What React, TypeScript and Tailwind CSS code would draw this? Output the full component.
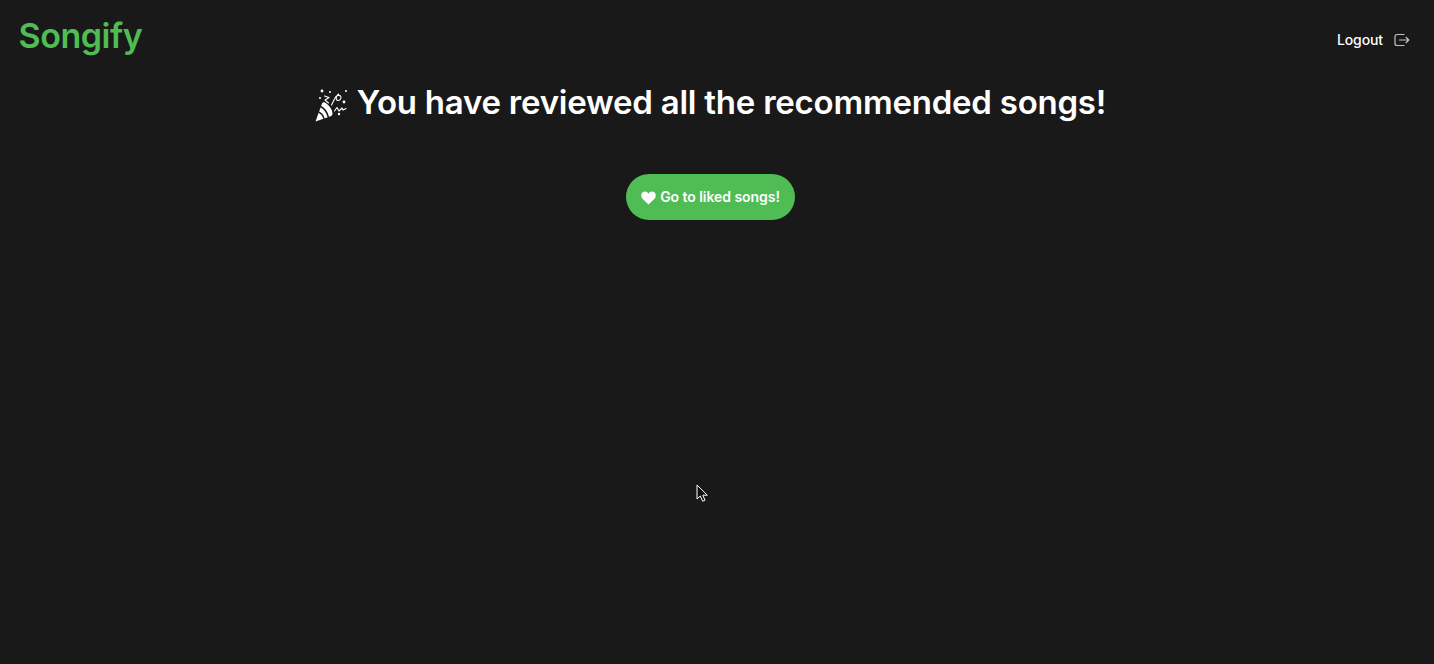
import React from "react";

const PartyIcon = () => (
  <svg width="34" height="38" viewBox="0 0 34 38" fill="none" className="shrink-0">
    {/* cone */}
    <path d="M0.5 37.5L7 19.5C8 17.5 10 18 12 20C15 22.5 17.5 26 17.5 29.5C17.5 31.5 16.5 32 15 32.5Z" fill="#fff" />
    <path d="M5.6 22.5C8.5 24 12 27.5 13.4 33.2M3.6 28C6 29 8 31.2 9 34.8" stroke="#191919" strokeWidth="1.5" />
    {/* streamers */}
    <path d="M9.5 12L14 13.5L10 16L13.5 19" stroke="#fff" strokeWidth="1.1" strokeLinecap="round" strokeLinejoin="round" />
    <path d="M16.5 21L20 14C21 11.5 24.5 10.5 25.8 12.5C27 14.8 24 17.5 21.8 16C20.5 15 21.5 11.5 23.5 10" stroke="#fff" strokeWidth="1.1" strokeLinecap="round" />
    <path d="M19.5 27L22 23.5L24 27L27 24L28 26L31 24.5" stroke="#fff" strokeWidth="1.1" strokeLinecap="round" strokeLinejoin="round" />
    {/* confetti dots */}
    <circle cx="7" cy="7" r="1.4" fill="#fff" />
    <circle cx="15" cy="8" r="1" fill="#fff" />
    <circle cx="31" cy="7" r="1" fill="#fff" />
    <circle cx="5" cy="14" r="1" fill="#fff" />
    <circle cx="29" cy="18" r="1.4" fill="#fff" />
    <circle cx="24" cy="30" r="1.2" fill="#fff" />
  </svg>
);

const LogoutIcon = () => (
  <svg width="16" height="14" viewBox="0 0 16 14" fill="none" stroke="#c4c4c4" strokeWidth="1.2" strokeLinecap="round" strokeLinejoin="round">
    <path d="M10 1.5H3A2 2 0 0 0 1 3.5V10.5A2 2 0 0 0 3 12.5H10" />
    <path d="M5.5 7H14.8M12 4.3L14.8 7L12 9.7" />
  </svg>
);

const HeartIcon = () => (
  <svg width="15" height="15" viewBox="0 0 14 14" fill="#fff">
    <path d="M7 13.6L1.4 8.1C-0.3 6.3 0 3.4 1.6 2.2C3.4 0.9 5.8 1.5 7 3.5C8.2 1.5 10.6 0.9 12.4 2.2C14 3.4 14.3 6.3 12.6 8.1Z" />
  </svg>
);

const Cursor = () => (
  <svg width="13" height="19" viewBox="0 0 13 19" className="absolute left-[696px] top-[484px]">
    <path d="M1 1V15L4.3 12L6.6 17.2L9 16.2L6.8 11.2H11.3Z" fill="#111" stroke="#fff" strokeWidth="1" strokeLinejoin="round" />
  </svg>
);

export default function App() {
  return (
    <div className="relative h-[664px] overflow-hidden bg-[#191919] text-white font-['Inter',sans-serif]">
      <header className="flex h-[75px] items-start justify-between pl-[18.5px] pr-[24px]">
        <h1 className="mt-[14px] text-[34px] leading-[44px] font-[560] tracking-[-0.45px] text-[#4fbd54]">Songify</h1>
        <button className="mt-[30px] flex items-center gap-[11px] text-sm leading-5 font-medium">
          <span className="tracking-[-0.1px]">Logout</span>
          <LogoutIcon />
        </button>
      </header>

      <main className="flex flex-col items-center pr-[13px]">
        <div className="flex h-[56px] items-center gap-[8px]">
          <PartyIcon />
          <h2 className="pb-[2px] text-[33px] leading-[44px] font-semibold tracking-[-0.23px]">You have reviewed all the recommended songs!</h2>
        </div>
        <button className="mt-[43px] flex h-[46px] w-[169px] items-center justify-center gap-[4px] rounded-full bg-[#4fbd54] text-sm font-semibold">
          <HeartIcon />
          <span className="tracking-[-0.05px]">Go to liked songs!</span>
        </button>
      </main>

      <Cursor />
    </div>
  );
}
